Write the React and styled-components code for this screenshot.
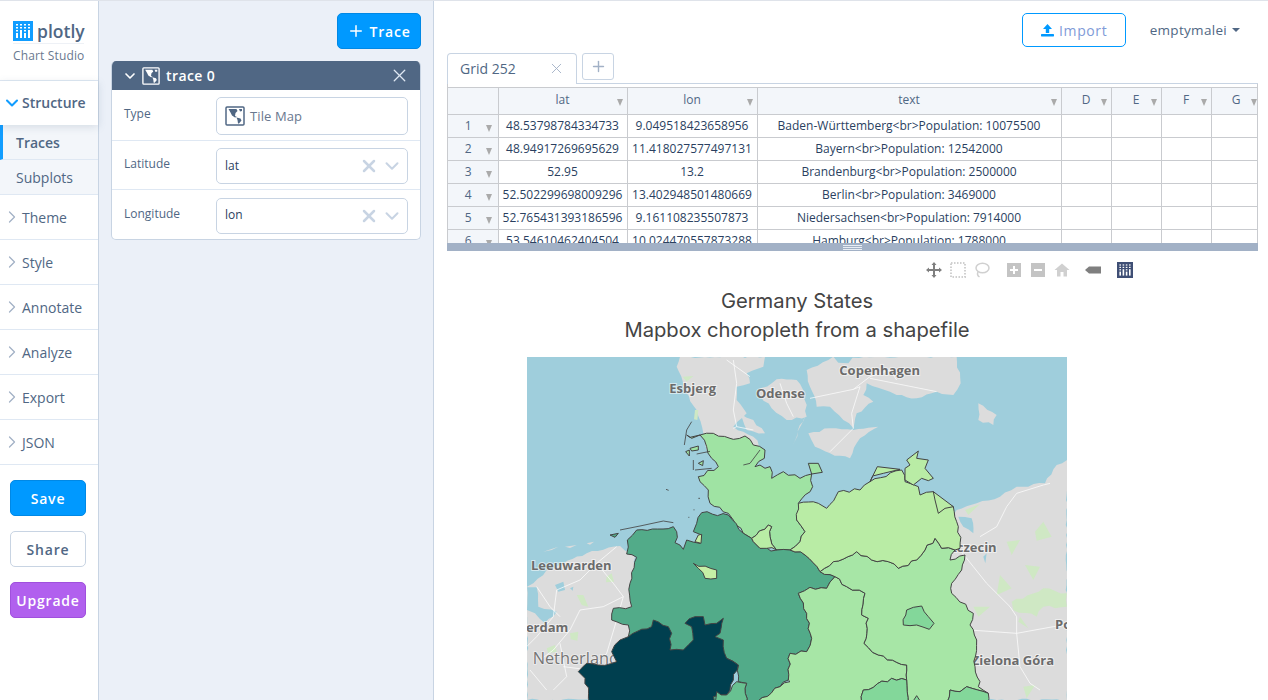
import React from "react";
import styled, { createGlobalStyle } from "styled-components";
import { ChevronDown, ChevronRight, Plus, X } from "lucide-react";

const GlobalStyle = createGlobalStyle`
  html, body {
    margin: 0;
    height: 100%;
    overflow: hidden;
    background: white;
    font-family: "Open Sans", "Liberation Sans", sans-serif;
    color: #506784;
  }
  * { box-sizing: border-box; }
`;

const Page = styled.div`
  width: 1268px;
  height: 700px;
  display: flex;
  border-top: 1px solid #dfe3ea;
  overflow: hidden;
`;

/* left nav */
const Sidebar = styled.div`
  width: 99px;
  flex: none;
  display: flex;
  flex-direction: column;
  border-right: 1px solid #c8d4e3;
  background: white;
`;

const LogoBlock = styled.div`
  height: 80px;
  padding: 19px 14px 0 13px;
  border-bottom: 1px solid #dfe8f3;
`;

const LogoRow = styled.div`
  display: flex;
  align-items: center;
  gap: 4px;
  height: 24px;
  padding-bottom: 2px;
  border-bottom: 1px solid #eef1f6;
  & > svg {
    flex: none;
  }
`;

const LogoWord = styled.span`
  font-size: 17.5px;
  font-weight: 600;
  line-height: 20px;
  color: #506784;
`;

const LogoSub = styled.div`
  margin-top: 2px;
  font-size: 12px;
  line-height: 20px;
  white-space: nowrap;
  letter-spacing: 0.15px;
  color: #69788f;
`;

const SectionHead = styled.div`
  height: ${(p) => (p.$open ? 44 : 45)}px;
  display: flex;
  align-items: center;
  padding-left: 2px;
  font-size: 14px;
  font-weight: ${(p) => (p.$open ? 600 : 400)};
  background: white;
  border-bottom: 1px solid ${(p) => (p.$open ? "transparent" : "#dfe8f3")};
  box-shadow: ${(p) => (p.$open ? "0 2px 8px rgba(80,103,132,0.18)" : "none")};
  position: relative;
`;

const SubItem = styled.div`
  height: 35px;
  display: flex;
  align-items: center;
  padding-left: ${(p) => (p.$active ? "13px" : "16px")};
  font-size: 14px;
  font-weight: ${(p) => (p.$active ? 600 : 400)};
  background: #f3f6fa;
  border-left: ${(p) => (p.$active ? "3px solid #119dff" : "none")};
  border-bottom: 1px solid #dfe8f3;
`;

const SideButtons = styled.div`
  display: flex;
  flex-direction: column;
  gap: 15px;
  padding: 15px 12px 0 10px;
`;

const SideButton = styled.div`
  height: 36px;
  display: flex;
  align-items: center;
  justify-content: center;
  border-radius: 5px;
  font-size: 14px;
  font-weight: 600;
  letter-spacing: 0.8px;
  color: ${(p) => p.$color};
  background: ${(p) => p.$bg};
  border: 1px solid ${(p) => p.$line};
`;

/* trace panel */
const Panel = styled.div`
  width: 335px;
  flex: none;
  background: #ebf0f8;
  border-right: 1px solid #c8d4e3;
  padding: 12px 12px 0 12px;
`;

const PanelTop = styled.div`
  display: flex;
  justify-content: flex-end;
  margin-bottom: 12px;
`;

const TraceButton = styled.div`
  width: 84px;
  height: 36px;
  display: flex;
  align-items: center;
  justify-content: center;
  gap: 4px;
  background: #0099ff;
  border: 1px solid #0088e5;
  border-radius: 5px;
  color: white;
  font-size: 14px;
  font-weight: 600;
  letter-spacing: 0.8px;
`;

const Fold = styled.div`
  width: 310px;
  background: white;
  border: 1px solid #c8d4e3;
  border-top: none;
  border-radius: 5px;
  overflow: hidden;
`;

const FoldHead = styled.div`
  height: 29px;
  margin: 0 -1px;
  padding: 0 11px 0 11px;
  display: flex;
  align-items: center;
  gap: 4px;
  background: #506784;
  color: white;
  font-size: 14px;
  font-weight: 600;
  letter-spacing: 0.4px;
`;

const FoldTitle = styled.span`
  flex: 1;
  margin-left: 2px;
`;

const Row = styled.div`
  height: ${(p) => p.$h}px;
  display: flex;
  align-items: center;
  padding: 2px 12px 0 12px;
  border-bottom: ${(p) => (p.$last ? "none" : "1px solid #dfe8f3")};
`;

const RowLabel = styled.div`
  width: 92px;
  flex: none;
  font-size: 12px;
  line-height: 20px;
  padding-bottom: 4px;
`;

const Dropdown = styled.div`
  width: 192px;
  height: ${(p) => p.$h}px;
  display: flex;
  align-items: center;
  padding: 0 4px 0 8px;
  gap: 2px;
  background: white;
  border: 1px solid #c8d4e3;
  border-radius: 5px;
  font-size: 12px;
  color: #506784;
  & > svg {
    flex: none;
  }
`;

const DropValue = styled.span`
  flex: 1;
  color: #2a3f5f;
  padding-bottom: 2px;
`;

const DropHint = styled.span`
  font-size: 13px;
  letter-spacing: 0.1px;
  color: #69788f;
  margin-left: 3px;
`;

/* main column */
const Main = styled.div`
  flex: 1;
  min-width: 0;
  display: flex;
  flex-direction: column;
`;

const TopBar = styled.div`
  height: 52px;
  flex: none;
  display: flex;
  align-items: center;
  justify-content: flex-end;
  padding: 6px 28px 0 0;
  gap: 24px;
`;

const ImportButton = styled.div`
  width: 104px;
  height: 34px;
  display: flex;
  align-items: center;
  justify-content: center;
  gap: 4px;
  border: 1px solid #0099ff;
  border-radius: 5px;
  font-size: 14px;
  letter-spacing: 0.6px;
  color: #7f9bd8;
`;

const UserName = styled.div`
  display: flex;
  align-items: center;
  gap: 5px;
  font-size: 13.5px;
  letter-spacing: 0.3px;
  color: #506784;
`;

const Caret = styled.span`
  width: 0;
  height: 0;
  border-left: 4px solid transparent;
  border-right: 4px solid transparent;
  border-top: 4px solid #506784;
`;

const TabBar = styled.div`
  height: 31px;
  flex: none;
  margin: 0 10px 0 13px;
  display: flex;
  align-items: flex-start;
  gap: 5px;
  border-bottom: 1px solid #c8d4e3;
`;

const Tab = styled.div`
  width: 130px;
  height: 31px;
  display: flex;
  align-items: center;
  justify-content: space-between;
  padding: 0 11px 2px 12px;
  background: white;
  border: 1px solid #c8d4e3;
  border-bottom: none;
  border-radius: 4px 4px 0 0;
  font-size: 14px;
`;

const AddTab = styled.div`
  width: 32px;
  height: 27px;
  display: flex;
  align-items: center;
  justify-content: center;
  border: 1px solid #c8d4e3;
  border-radius: 3px;
`;

const GridBox = styled.div`
  height: 159px;
  flex: none;
  margin: 0 10px 0 13px;
  padding-top: 3px;
  border-left: 1px solid #c9cbcf;
  border-right: 1px solid #c9cbcf;
  overflow: hidden;
`;

const Table = styled.table`
  width: 813px;
  table-layout: fixed;
  border-collapse: collapse;
  font-size: 12px;
  color: #2a3f5f;
`;

const Th = styled.th`
  position: relative;
  height: 27px;
  padding: 0 0 3px;
  font-weight: 400;
  color: #506784;
  background: #f3f6fa;
  border: 1px solid #c9cbcf;
  border-left: ${(p) => (p.$first ? "none" : "1px solid #c9cbcf")};
  &::after {
    content: ${(p) => (p.$first ? "none" : '""')};
    position: absolute;
    right: 4px;
    top: 11px;
    border-left: 3.5px solid transparent;
    border-right: 3.5px solid transparent;
    border-top: 7px solid #aaaaaa;
  }
`;

const RowHead = styled.td`
  position: relative;
  height: 23px;
  padding: 0 9px 1px 0;
  text-align: center;
  color: #506784;
  background: #f3f6fa;
  border: 1px solid #c9cbcf;
  border-left: none;
  &::after {
    content: "";
    position: absolute;
    right: 6px;
    top: 10px;
    border-left: 3.5px solid transparent;
    border-right: 3.5px solid transparent;
    border-top: 7px solid #aaaaaa;
  }
`;

const Td = styled.td`
  height: 23px;
  padding: 0 0 1px;
  text-align: center;
  white-space: nowrap;
  overflow: hidden;
  border: 1px solid #c9cbcf;
`;

const Splitter = styled.div`
  height: 8px;
  flex: none;
  margin: 0 10px 0 13px;
  display: flex;
  align-items: center;
  justify-content: center;
  background: #a2b1c6;
`;

const Grip = styled.div`
  width: 19px;
  height: 5px;
  border-top: 1px solid #e8edf3;
  border-bottom: 1px solid #e8edf3;
  background: linear-gradient(#e8edf3, #e8edf3) center / 100% 1px no-repeat;
`;

const Plot = styled.div`
  width: 700px;
  margin-left: 13px;
  display: flex;
  flex-direction: column;
  align-items: center;
`;

const ModeBar = styled.div`
  align-self: flex-end;
  height: 35px;
  padding: 3px 14px 0 0;
  display: flex;
  align-items: center;
`;

const ModeIcon = styled.svg`
  width: 16px;
  height: 16px;
  margin-left: ${(p) => p.$gap}px;
  display: block;
`;

const PlotTitle = styled.div`
  font-family: "Inter", "Open Sans", sans-serif;
  font-size: 20.2px;
  line-height: 29px;
  text-align: center;
  color: #444444;
  margin-bottom: 13px;
`;

const MapFrame = styled.svg`
  width: 540px;
  height: 343px;
  display: block;
  flex: none;
  background: #9fcedc;
`;

const MapLabel = styled.text`
  font-family: "Open Sans", sans-serif;
  font-size: 39px;
  font-weight: 700;
  fill: #6b6b6b;
  stroke: rgba(255, 255, 255, 0.55);
  stroke-width: 6px;
  paint-order: stroke;
`;

const CountryLabel = styled.text`
  font-family: "Open Sans", sans-serif;
  font-size: 49px;
  fill: #757575;
  stroke: rgba(255, 255, 255, 0.5);
  stroke-width: 5px;
  paint-order: stroke;
`;

const rows = [
  ["1", "48.53798784334733", "9.049518423658956", "Baden-Württemberg<br>Population: 10075500"],
  ["2", "48.94917269695629", "11.418027577497131", "Bayern<br>Population: 12542000"],
  ["3", "52.95", "13.2", "Brandenburg<br>Population: 2500000"],
  ["4", "52.502299698009296", "13.402948501480669", "Berlin<br>Population: 3469000"],
  ["5", "52.765431393186596", "9.161108235507873", "Niedersachsen<br>Population: 7914000"],
  ["6", "53.54610462404504", "10.024470557873288", "Hamburg<br>Population: 1788000"],
];

const sections = ["Theme", "Style", "Annotate", "Analyze", "Export", "JSON"];

// coastlines and borders are jagged; the same edge gets the same jitter in both polygons
const rough = (str, amp = 5) => {
  const pts = str.trim().split(/\s+/).map((p) => p.split(",").map(Number));
  const out = [];
  pts.forEach((a, i) => {
    const b = pts[(i + 1) % pts.length];
    const swap = a[0] > b[0] || (a[0] === b[0] && a[1] > b[1]);
    const [p, q] = swap ? [b, a] : [a, b];
    const len = Math.hypot(q[0] - p[0], q[1] - p[1]);
    const steps = Math.floor(len / 15);
    let seed = (p[0] * 73 + p[1] * 151 + q[0] * 283 + q[1] * 409) % 1000;
    const mids = [];
    for (let s = 1; s < steps; s++) {
      seed = (seed * 137 + 59) % 1000;
      const off = (seed / 500 - 1) * amp;
      const t = s / steps;
      mids.push([
        p[0] + (q[0] - p[0]) * t - ((q[1] - p[1]) / len) * off,
        p[1] + (q[1] - p[1]) * t + ((q[0] - p[0]) / len) * off,
      ]);
    }
    if (swap) mids.reverse();
    out.push(a, ...mids);
  });
  return out.map((p) => p[0].toFixed(1) + "," + p[1].toFixed(1)).join(" ");
};

const land = [
  "480,20 735,20 730,50 680,70 690,100 650,110 650,150 680,190 640,230 700,260 730,300 560,300 550,250 530,180 490,110 470,50",
  "710,125 770,88 830,90 855,130 860,200 800,210 755,175",
  "660,190 700,210 735,250 680,240",
  "860,60 940,20 1310,20 1322,100 1300,135 1250,125 1190,145 1130,135 1110,125 1040,100 1030,135 1060,155 1010,190 1000,235 970,210 930,170 890,170 870,110",
  "865,250 930,235 1000,240 1075,230 1020,265 990,325 930,310 885,290",
  "815,290 855,195 830,260",
  "1375,160 1430,195 1420,225 1375,210",
  "1641,330 1610,345 1575,400 1490,410 1440,440 1370,460 1310,480 1250,600 1250,1050 1641,1050",
  "21,710 40,700 80,660 130,640 200,610 300,588 345,620 345,1050 21,1050",
];

const states = [
  ["#9fe3a3", "540,255 580,250 630,265 640,268 675,258 700,285 735,300 733,325 705,350 750,350 755,385 790,365 840,385 875,372 878,410 835,460 850,475 830,510 855,545 840,575 810,600 770,600 750,560 755,530 745,525 695,565 670,550 640,510 625,490 570,460 565,420 540,395 535,380 595,350 575,325 560,290"],
  ["#52ab89", "545,488 625,495 670,550 695,565 700,575 720,595 770,600 810,600 855,615 900,665 945,680 920,715 870,712 835,730 860,790 875,865 860,905 810,910 805,990 780,1010 700,1060 680,1060 680,1000 655,995 655,945 620,925 600,1060 325,1060 325,860 325,825 275,810 280,775 335,770 330,700 350,622 320,612 322,570 350,540 460,530 470,545 465,578 490,598 500,570 540,580 545,555 520,545 530,520"],
  ["#003f4f", "325,860 395,830 400,810 445,830 455,850 450,900 490,900 520,870 515,830 495,820 525,800 550,800 555,825 590,820 610,805 600,850 585,860 610,870 620,925 655,945 640,990 620,1035 580,1040 585,1060 210,1060 195,985 175,965 200,940 235,945 290,935 275,905 300,870"],
  ["#68c191", "585,1060 590,1025 620,1035 650,995 680,1000 680,1060"],
  ["#a7e6a6", "700,1060 780,1010 810,995 805,990 810,910 860,905 875,865 860,790 835,730 870,712 920,715 945,680 980,710 1035,730 1025,795 1045,805 1032,880 1075,915 1160,945 1160,990 1115,985 1030,1020 1025,1060"],
  ["#a7e6a6", "940,635 1010,605 1055,630 1105,635 1135,655 1190,630 1215,600 1245,565 1265,595 1305,600 1290,630 1335,615 1325,660 1295,700 1295,730 1360,790 1350,825 1370,870 1365,950 1380,995 1375,1010 1405,1030 1340,1010 1320,1025 1290,1020 1280,1060 1165,1060 1160,990 1160,945 1075,915 1032,880 1045,805 1025,795 1035,730 980,710 945,680 900,665"],
  ["#b9eca5", "830,510 835,460 895,460 920,475 955,425 1020,420 1050,395 1145,360 1155,395 1195,410 1200,435 1240,425 1250,460 1300,470 1315,530 1320,595 1305,600 1265,595 1245,565 1215,600 1190,630 1135,655 1105,635 1055,630 1010,605 940,635 900,665 855,615 810,600 840,575 855,545"],
  ["#83d79a", "1150,825 1160,780 1180,772 1205,768 1225,800 1242,820 1228,838 1190,825"],
  ["#83d79a", "1025,1060 1030,1020 1115,985 1160,990 1165,1060"],
  ["#83d79a", "1280,1060 1290,1020 1320,1025 1340,1010 1405,1030 1405,1060"],
  ["#83d79a", "1175,1060 1190,1037 1205,1060"],
  ["#b9eca5", "695,565 745,525 755,530 750,560 770,600 740,595 720,595 700,575"],
  ["#c6f0a6", "520,640 590,660 590,685 555,685 535,655"],
];

// small islands keep their clean outline
const islands = [
  ["#9fe3a3", "865,340 895,340 907,367 875,372"],
  ["#b9eca5", "1050,395 1072,350 1140,358 1090,370 1058,378"],
  ["#b9eca5", "1155,355 1170,345 1160,330 1195,303 1190,325 1225,330 1215,355 1240,385 1225,392 1205,385 1180,405 1155,390"],
  ["#b9eca5", "1240,425 1300,470 1275,475 1255,490 1245,450"],
  ["#c6f0a6", "525,575 535,555 545,553 543,580"],
  ["#9fe3a3", "510,295 535,288 535,300 515,303"],
  ["#9fe3a3", "497,305 508,300 508,318"],
  ["#9fe3a3", "535,340 550,332 548,347"],
  ["#9fe3a3", "500,255 510,262 540,255 515,265"],
  ["#52ab89", "270,555 295,550 285,562"],
];

const PlotlyMark = ({ size, bg }) => (
  <svg width={size} height={size} viewBox="0 0 20 20">
    <rect width="20" height="20" fill={bg} />
    <g fill="white">
      <rect x="3" y="12" width="2" height="5" />
      <rect x="7" y="9" width="2" height="8" />
      <rect x="11" y="12" width="2" height="5" />
      <rect x="15" y="9" width="2" height="8" />
      {[3, 7, 11, 15].map((x) => (
        <rect key={x} x={x} y="3" width="2" height="1.500" />
      ))}
      <rect x="3" y="6" width="2" height="1.500" />
      <rect x="7" y="6" width="2" height="1.500" />
      <rect x="11" y="6" width="2" height="1.500" />
      <rect x="15" y="6" width="2" height="1.500" />
      <rect x="3" y="9" width="2" height="1.500" />
      <rect x="11" y="9" width="2" height="1.500" />
    </g>
  </svg>
);

const TileMapIcon = ({ color, size }) => (
  <svg width={size} height={size} viewBox="0 0 20 20" fill="none">
    <rect x="1" y="1" width="18" height="18" rx="1" stroke={color} strokeWidth="1.500" />
    <path d="M3.500 3h8l1 2-2 2-.5 3 2 1-2 .5-3-2-1.500-3z" fill={color} />
    <path d="M11.500 11.500l4 1 1 2-2.500 3h-1l-.5-3.500z" fill={color} />
    <path d="M14 3h3v2l-2 .5z" fill={color} />
  </svg>
);

const MapSheet = () => (
  <MapFrame viewBox="21 21 1620 1029">
    <g fill="#dcdcdc">
      {land.map((pts) => (
        <polygon key={pts} points={rough(pts, 4)} />
      ))}
      <polygon points="70,605 115,590 95,600" />
      <polygon points="135,590 170,585 150,594" />
      <polygon points="200,580 222,575 210,584" />
    </g>
    {/* inland water */}
    <g fill="#9fcedc">
      <polygon points={rough("21,712 50,712 55,770 110,785 75,820 45,790 21,780", 3)} />
      <polygon points="105,705 130,695 135,720 115,725" />
      <polygon points="150,715 160,710 158,722" />
      <polygon points={rough("1315,500 1355,505 1360,550 1330,530", 3)} />
      <polygon points="940,20 1000,20 985,40 955,38" />
      <polygon points="1390,620 1400,610 1396,640" />
    </g>
    {/* woods */}
    <g fill="#cfe8c4">
      <polygon points="260,680 275,670 282,695 258,697" />
      <polygon points="170,735 190,735 205,770 185,765" />
      <polygon points="150,850 175,845 172,872 152,868" />
      <polygon points="80,895 105,885 110,905 85,910" />
      <polygon points="525,180 535,180 532,210 522,208" />
      <polygon points="488,80 520,78 500,95" />
      <polygon points="1545,545 1570,515 1595,560 1550,572" />
      <polygon points="1460,575 1500,570 1475,615" />
      <polygon points="1515,645 1560,650 1540,690" />
      <polygon points="1440,675 1475,715 1430,735" />
      <polygon points={rough("1475,755 1570,715 1641,730 1641,770 1570,770 1550,800 1480,780", 5)} />
      <polygon points="1360,770 1410,770 1375,800" />
      <polygon points="1500,800 1525,835 1495,815" />
      <polygon points="1335,480 1380,462 1345,495" />
      <polygon points="1510,1010 1545,1005 1520,1045" />
    </g>
    {/* roads */}
    <g fill="none" stroke="white" strokeWidth="2.500" opacity="0.85">
      <path d="M620 30l70 50M640 30l10 70 -10 80 10 50 -10 5M650 230l50 10M780 100l20 60 20 40" />
      <path d="M870 145l130 -27 20 -8 -25 80 5 45 -70 70M1000 118l50 -38 60 -20 20 30M1050 85l200 40" />
      <path d="M1320 600l40 50 40 50 70 70 20 30v50l10 100 30 50 30 20M1350 840l140 10 110 -20 41 -5M1380 560l50 -30 30 -60 30 -40 80 -25 20 -5" />
      <path d="M290 590l-60 50 -50 50 -70 30 -10 80 -50 60 -30 30M230 640l50 60 30 40 -60 30 -70 10 -30 60 -50 60 -40 30M120 880l20 100 -40 40M310 740l-20 70 -30 100 -50 50 -80 -10M50 710l40 60 30 30M30 960l50 60" />
    </g>
    {/* place names */}
    <MapLabel x="448" y="130">Esbjerg</MapLabel>
    <MapLabel x="708" y="145">Odense</MapLabel>
    <MapLabel x="958" y="76">Copenhagen</MapLabel>
    <MapLabel x="33" y="660">Leeuwarden</MapLabel>
    <MapLabel x="145" y="847" textAnchor="end">Amsterdam</MapLabel>
    <CountryLabel x="38" y="941">Netherlands</CountryLabel>
    <MapLabel x="1430" y="607" textAnchor="end">Szczecin</MapLabel>
    <MapLabel x="1602" y="945" textAnchor="end">Zielona Góra</MapLabel>
    <MapLabel x="1605" y="838">Poznań</MapLabel>
    {/* states */}
    <g stroke="#444444" strokeWidth="3" strokeLinejoin="round">
      {states.map(([fill, pts]) => (
        <polygon key={pts} fill={fill} points={rough(pts)} />
      ))}
      {islands.map(([fill, pts]) => (
        <polygon key={pts} fill={fill} points={pts} />
      ))}
    </g>
    <g fill="none" stroke="#444444" strokeWidth="2.500">
      <path d="M515 215l-15 25 -7 45" />
      <path d="M520 330v30M530 312l40 -8M525 360l50 -5" />
      <path d="M300 540l60 -12 70 -15 30 5" />
      <path d="M438 418l8 3M535 445h5M522 478v3M505 502h3" />
      <path d="M670 345l20 -5 30 -40" />
    </g>
  </MapFrame>
);

const App = () => {
  return (
    <Page>
      <GlobalStyle />
      <Sidebar>
        <LogoBlock>
          <LogoRow>
            <PlotlyMark size={20} bg="#119dff" />
            <LogoWord>plotly</LogoWord>
          </LogoRow>
          <LogoSub>Chart Studio</LogoSub>
        </LogoBlock>
        <SectionHead $open>
          <ChevronDown size={20} strokeWidth={2.5} color="#119dff" />
          Structure
        </SectionHead>
        <SubItem $active>Traces</SubItem>
        <SubItem>Subplots</SubItem>
        {sections.map((name) => (
          <SectionHead key={name}>
            <ChevronRight size={20} strokeWidth={1.5} color="#a2b1c6" />
            {name}
          </SectionHead>
        ))}
        <SideButtons>
          <SideButton $color="white" $bg="#0099ff" $line="#0088e5">Save</SideButton>
          <SideButton $color="#506784" $bg="white" $line="#c8d4e3">Share</SideButton>
          <SideButton $color="white" $bg="#b160ee" $line="#a050dd">Upgrade</SideButton>
        </SideButtons>
      </Sidebar>

      <Panel>
        <PanelTop>
          <TraceButton>
            <Plus size={18} strokeWidth={2} />
            Trace
          </TraceButton>
        </PanelTop>
        <Fold>
          <FoldHead>
            <ChevronDown size={16} strokeWidth={2.5} />
            <TileMapIcon color="white" size={18} />
            <FoldTitle>trace 0</FoldTitle>
            <X size={21} strokeWidth={1.5} color="#dfe8f3" />
          </FoldHead>
          <Row $h={51}>
            <RowLabel>Type</RowLabel>
            <Dropdown $h={38}>
              <TileMapIcon color="#506784" size={20} />
              <DropHint>Tile Map</DropHint>
            </Dropdown>
          </Row>
          <Row $h={49}>
            <RowLabel>Latitude</RowLabel>
            <Dropdown $h={36}>
              <DropValue>lat</DropValue>
              <X size={20} strokeWidth={3} color="#c8d4e3" />
              <ChevronDown size={22} strokeWidth={2.2} color="#c8d4e3" />
            </Dropdown>
          </Row>
          <Row $h={49} $last>
            <RowLabel>Longitude</RowLabel>
            <Dropdown $h={36}>
              <DropValue>lon</DropValue>
              <X size={20} strokeWidth={3} color="#c8d4e3" />
              <ChevronDown size={22} strokeWidth={2.2} color="#c8d4e3" />
            </Dropdown>
          </Row>
        </Fold>
      </Panel>

      <Main>
        <TopBar>
          <ImportButton>
            <svg width="15" height="14" viewBox="0 0 15 14">
              <path d="M7.500 1L12 6H9.200v4H5.800V6H3z" fill="#0099ff" />
              <rect x="1" y="11" width="13" height="2.400" rx="0.600" fill="#0099ff" />
            </svg>
            Import
          </ImportButton>
          <UserName>
            emptymalei
            <Caret />
          </UserName>
        </TopBar>
        <TabBar>
          <Tab>
            Grid 252
            <X size={17} strokeWidth={1.3} color="#a2b1c6" />
          </Tab>
          <AddTab>
            <Plus size={17} strokeWidth={2} color="#a2b1c6" />
          </AddTab>
        </TabBar>
        <GridBox>
          <Table>
            <colgroup>
              <col style={{ width: 50 }} />
              <col style={{ width: 129 }} />
              <col style={{ width: 130 }} />
              <col style={{ width: 304 }} />
              <col style={{ width: 50 }} />
              <col style={{ width: 50 }} />
              <col style={{ width: 50 }} />
              <col style={{ width: 50 }} />
            </colgroup>
            <thead>
              <tr>
                <Th $first />
                <Th>lat</Th>
                <Th>lon</Th>
                <Th>text</Th>
                <Th>D</Th>
                <Th>E</Th>
                <Th>F</Th>
                <Th>G</Th>
              </tr>
            </thead>
            <tbody>
              {rows.map((r) => (
                <tr key={r[0]}>
                  <RowHead>{r[0]}</RowHead>
                  <Td>{r[1]}</Td>
                  <Td>{r[2]}</Td>
                  <Td>{r[3]}</Td>
                  <Td />
                  <Td />
                  <Td />
                  <Td />
                </tr>
              ))}
            </tbody>
          </Table>
        </GridBox>
        <Splitter>
          <Grip />
        </Splitter>
        <Plot>
          <ModeBar>
            <ModeIcon viewBox="0 0 16 16" $gap={0}>
              <path d="M8 0l2.500 3H9v4h4V5.500L16 8l-3 2.500V9H9v4h1.500L8 16l-2.500-3H7V9H3v1.500L0 8l3-2.500V7h4V3H5.500z" fill="#7f7f7f" />
            </ModeIcon>
            <ModeIcon viewBox="0 0 16 16" $gap={8}>
              <rect x="1" y="1" width="14" height="14" fill="none" stroke="#d0d0d0" strokeWidth="2" strokeDasharray="1.500 1.500" />
            </ModeIcon>
            <ModeIcon viewBox="0 0 16 16" $gap={8}>
              <ellipse cx="8.500" cy="6" rx="6.500" ry="4.800" fill="none" stroke="#d0d0d0" strokeWidth="1.500" />
              <path d="M4 10c-1 2 0 4 1.500 5" fill="none" stroke="#d0d0d0" strokeWidth="1.500" />
            </ModeIcon>
            <ModeIcon viewBox="0 0 16 16" $gap={16}>
              <rect x="1" y="1" width="14" height="14" fill="#c4c4c4" />
              <path d="M7 4h2v3h3v2H9v3H7V9H4V7h3z" fill="white" />
            </ModeIcon>
            <ModeIcon viewBox="0 0 16 16" $gap={8}>
              <rect x="1" y="1" width="14" height="14" fill="#c4c4c4" />
              <rect x="4" y="7" width="8" height="2" fill="white" />
            </ModeIcon>
            <ModeIcon viewBox="0 0 16 16" $gap={8}>
              <path d="M8 1.500L15.500 8H13v6.500H9.500V10h-3v4.500H3V8H.5z" fill="#d0d0d0" />
            </ModeIcon>
            <ModeIcon viewBox="0 0 16 16" $gap={15}>
              <path d="M0 8l4-3.500h12v7H4z" fill="#7f7f7f" />
            </ModeIcon>
            <ModeIcon viewBox="0 0 20 20" $gap={16}>
              <PlotlyMark size={20} bg="#3f4f75" />
            </ModeIcon>
          </ModeBar>
          <PlotTitle>
            Germany States
            <br />
            Mapbox choropleth from a shapefile
          </PlotTitle>
          <MapSheet />
        </Plot>
      </Main>
    </Page>
  );
};

export default App;
